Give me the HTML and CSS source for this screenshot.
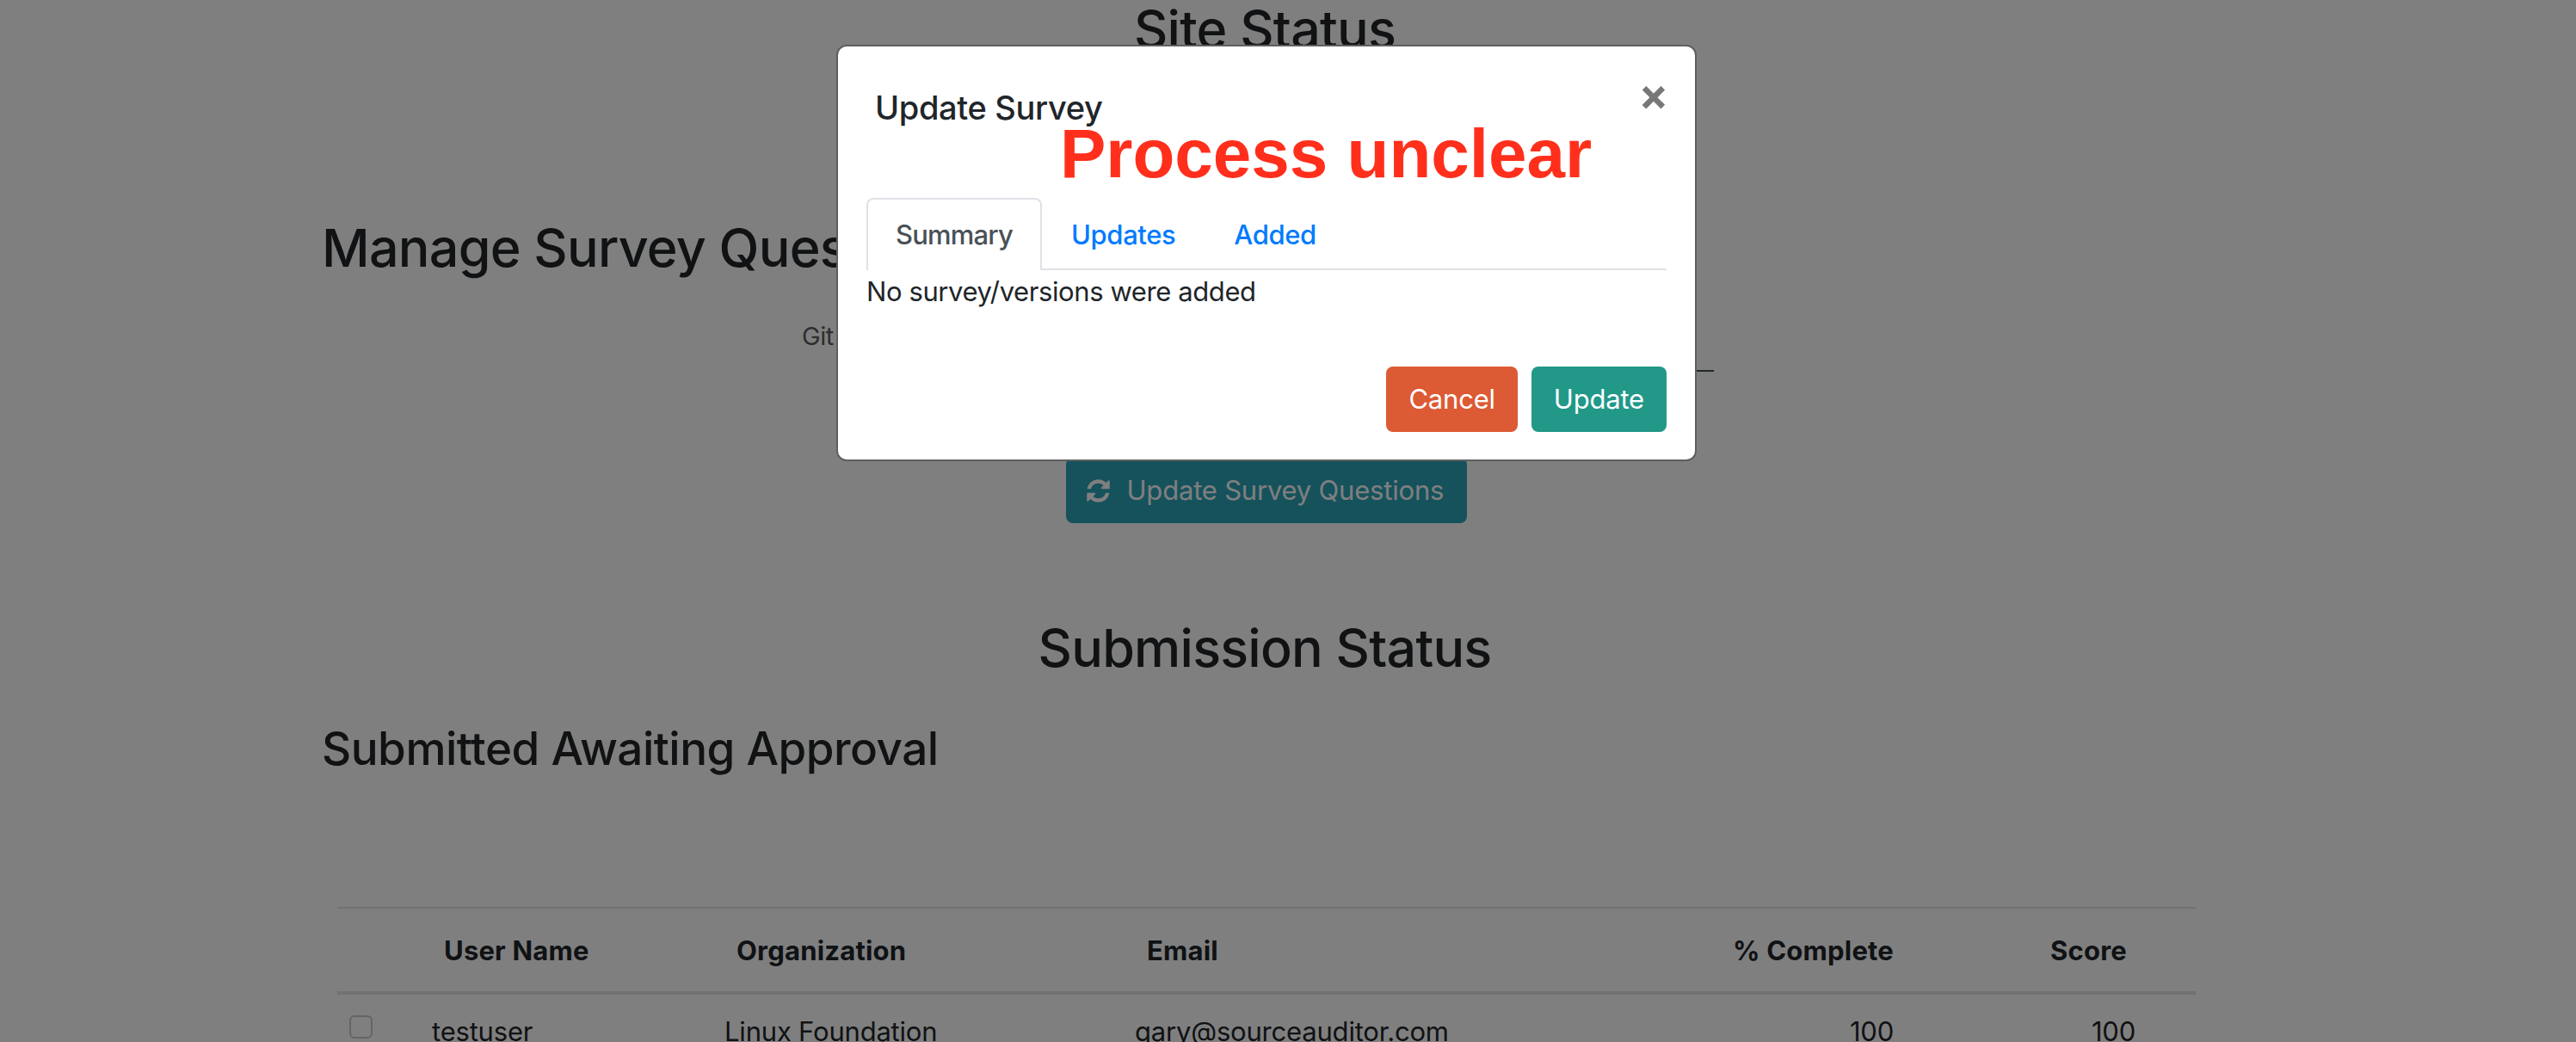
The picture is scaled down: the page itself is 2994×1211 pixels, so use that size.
FILE: index.html
```html
<!DOCTYPE html>
<html lang="en">

<head>
  <meta charset="UTF-8" />
  <title>Manage Survey Questions</title>
  <link rel="stylesheet" href="styles.css">
</head>

<body>
  <div class="container">
    <h1 class="site-title">Site Status</h1>
    <h2 class="manage-title">Manage Survey Questions</h2>
    <div class="git-row">
      <label class="git-label">Git</label>
      <span class="git-input"></span>
    </div>
    <div class="update-row">
      <button class="btn btn-update-questions">
        <svg class="refresh" viewBox="0 0 1792 1792"><path d="M1639 1056q0 5-1 7-64 268-268 434.5t-478 166.5q-146 0-282.5-55t-243.5-157l-129 129q-19 19-45 19t-45-19-19-45v-448q0-26 19-45t45-19h448q26 0 45 19t19 45-19 45l-137 137q71 66 161 102t187 36q134 0 250-65t186-179q11-17 53-117 8-23 30-23h192q13 0 22.5 9.5t9.5 22.5zm25-800v448q0 26-19 45t-45 19h-448q-26 0-45-19t-19-45 19-45l138-138q-148-137-349-137-134 0-250 65t-186 179q-11 17-53 117-8 23-30 23h-199q-13 0-22.5-9.5t-9.5-22.5v-7q65-268 270-434.5t480-166.5q146 0 284 55.5t245 156.5l130-129q19-19 45-19t45 19 19 45z"/></svg>
        <span>Update Survey Questions</span>
      </button>
    </div>
    <h1 class="submission-title">Submission Status</h1>
    <h3 class="awaiting-title">Submitted Awaiting Approval</h3>
    <table class="submissions">
      <thead>
        <tr>
          <th class="col-check"></th>
          <th class="col-user">User Name</th>
          <th class="col-org">Organization</th>
          <th class="col-email">Email</th>
          <th class="col-complete">% Complete</th>
          <th class="col-score">Score</th>
        </tr>
      </thead>
      <tbody>
        <tr>
          <td class="col-check"><span class="checkbox"></span></td>
          <td class="col-user">testuser</td>
          <td class="col-org">Linux Foundation</td>
          <td class="col-email">gary@sourceauditor.com</td>
          <td class="col-complete">100</td>
          <td class="col-score">100</td>
        </tr>
      </tbody>
    </table>
  </div>

  <div class="backdrop"></div>

  <div class="modal">
    <div class="modal-header">
      <h5 class="modal-title">Update Survey</h5>
      <span class="close">×</span>
    </div>
    <ul class="tabs">
      <li class="tab active">Summary</li>
      <li class="tab">Updates</li>
      <li class="tab">Added</li>
    </ul>
    <p class="tab-body">No survey/versions were added</p>
    <div class="modal-footer">
      <button class="btn btn-cancel">Cancel</button>
      <button class="btn btn-confirm">Update</button>
    </div>
  </div>

  <div class="note">Process unclear</div>
</body>

</html>
```

FILE: styles.css
```css
html,
body {
  margin: 0;
  height: 1211px;
  overflow: hidden;
}

body {
  background: #fff;
  color: #212529;
  font-family: Inter, "Liberation Sans", sans-serif;
  font-size: 31px;
  line-height: 46px;
  letter-spacing: -0.4px;
}

h1,
h2,
h3,
h5,
p,
ul {
  margin: 0;
  padding: 0;
  font-weight: 500;
}

.container {
  width: 2192px;
  margin-left: 374px;
}

.site-title,
.manage-title,
.submission-title {
  font-size: 61px;
  line-height: 76px;
  letter-spacing: -0.75px;
}

.site-title {
  margin-top: -4px;
  text-align: center;
}

.manage-title {
  margin-top: 178px;
}

.git-row {
  display: flex;
  align-items: center;
  height: 82px;
  margin-top: 24px;
  padding-left: 558px;
}

.git-label {
  font-size: 29px;
  color: #5c5c5c;
}

.git-input {
  align-self: flex-end;
  width: 1014px;
  margin-left: 9px;
  border-bottom: 2px solid #495057;
}

.update-row {
  display: flex;
  justify-content: center;
  margin-top: 100px;
  padding-left: 3px;
}

.btn {
  border: none;
  border-radius: 8px;
  color: #fff;
  font-family: inherit;
  font-size: 31px;
  line-height: 46px;
  letter-spacing: -0.2px;
}

.btn-update-questions {
  display: flex;
  align-items: center;
  gap: 18px;
  width: 466px;
  height: 76px;
  padding: 0 22px;
  background: #2aa4b8;
  white-space: nowrap;
}

.refresh {
  width: 31px;
  height: 31px;
  fill: #fff;
}

.submission-title {
  margin-top: 107px;
  text-align: center;
}

.awaiting-title {
  margin-top: 47px;
  font-size: 53px;
  line-height: 64px;
  letter-spacing: -0.5px;
}

.submissions {
  width: 2160px;
  margin: 152px 0 0 18px;
  border-collapse: collapse;
  table-layout: fixed;
}

.submissions th {
  height: 94px;
  padding: 2px 0 0;
  border-top: 2px solid #dee2e6;
  border-bottom: 4px solid #dee2e6;
  font-weight: 700;
  letter-spacing: 0.2px;
  text-align: left;
}

.submissions td {
  padding: 20px 0 0;
  letter-spacing: -0.2px;
  vertical-align: top;
}

.col-check {
  width: 110px;
}

.col-user {
  width: 326px;
}

.col-org {
  width: 463px;
}

.col-email {
  width: 486px;
}

.col-complete {
  width: 382px;
}

.submissions th.col-user,
.submissions th.col-org,
.submissions th.col-email {
  padding-left: 14px;
}

.submissions .col-complete,
.submissions .col-score {
  text-align: right;
}

.submissions th.col-score {
  padding-right: 80px;
}

.submissions td.col-score {
  padding-right: 70px;
}

.checkbox {
  display: block;
  width: 27px;
  height: 27px;
  margin: 4px 0 0 14px;
  border: 2px solid #c8c8c8;
  border-radius: 6px;
  box-sizing: border-box;
}

.backdrop {
  position: fixed;
  inset: 0;
  background: rgba(0, 0, 0, 0.5);
}

.modal {
  position: fixed;
  left: 972px;
  top: 52px;
  width: 1000px;
  height: 484px;
  box-sizing: border-box;
  padding: 0 33px;
  border: 2px solid #5f5f5f;
  border-radius: 12px;
  background: #fff;
}

.modal-header {
  display: flex;
  justify-content: space-between;
  padding: 48px 1px 0 10px;
}

.modal-title {
  font-size: 38px;
  line-height: 46px;
  letter-spacing: -0.35px;
}

.close {
  margin-top: -14px;
  color: #777;
  font-family: "Liberation Sans", sans-serif;
  font-size: 50px;
  font-weight: 700;
  line-height: 50px;
  -webkit-text-stroke: 1px #777;
}

.tabs {
  display: flex;
  height: 84px;
  margin-top: 82px;
  border-bottom: 2px solid #dee2e6;
  list-style: none;
  box-sizing: border-box;
}

.tab {
  padding: 20px 34px 0;
  color: #007bff;
}

.tab.active {
  height: 84px;
  box-sizing: border-box;
  padding: 18px 32px 0;
  border: 2px solid #dee2e6;
  border-bottom: none;
  border-radius: 8px 8px 0 0;
  background: #fff;
  color: #495057;
  letter-spacing: -0.8px;
}

.tab-body {
  margin-top: 2px;
  font-weight: 400;
}

.modal-footer {
  display: flex;
  justify-content: flex-end;
  gap: 16px;
  margin-top: 64px;
}

.btn-cancel,
.btn-confirm {
  height: 76px;
  padding: 0 26px;
}

.btn-cancel {
  background: #dc5a34;
}

.btn-confirm {
  background: #219888;
}

.note {
  position: fixed;
  left: 1232px;
  top: 133px;
  color: #ff2f1c;
  font-family: "Liberation Sans", sans-serif;
  font-size: 80px;
  font-weight: 700;
  line-height: 92px;
  letter-spacing: 0;
  white-space: nowrap;
}
```
